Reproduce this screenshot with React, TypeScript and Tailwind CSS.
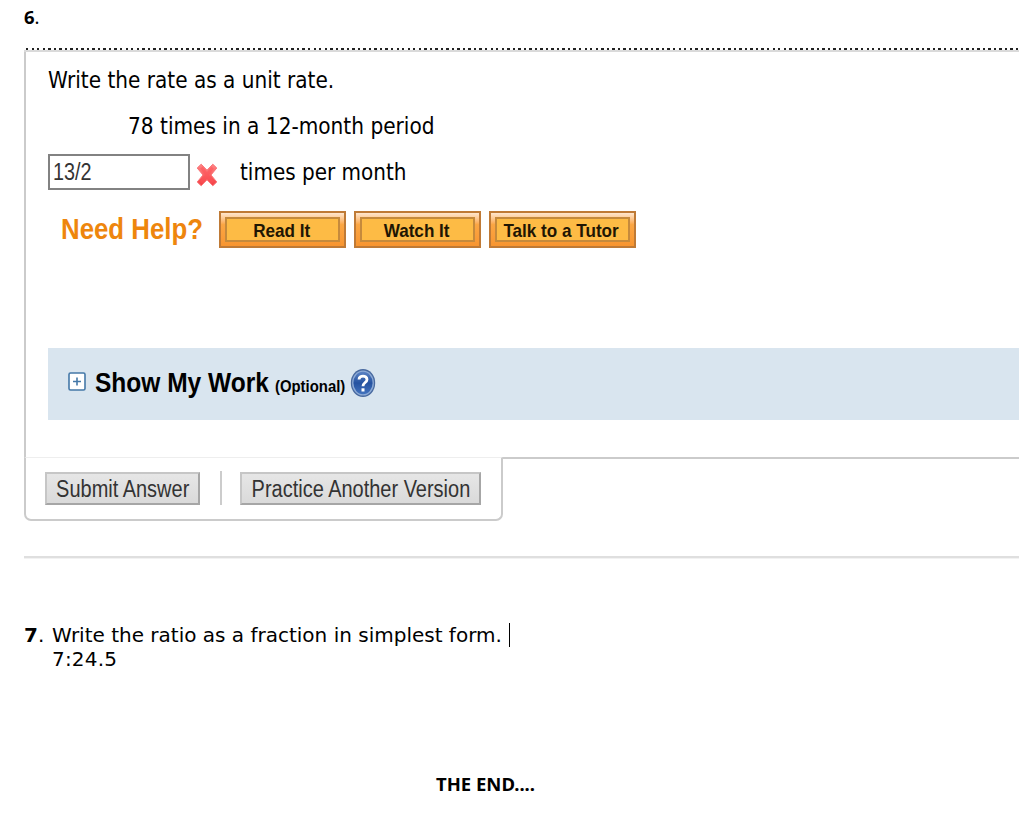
import { ReactNode } from "react";

const verdana = "font-['DejaVu_Sans',sans-serif] text-[23px] leading-[28px] whitespace-nowrap origin-left";

function HelpButton({ width, children }: { width: string; children: ReactNode }) {
  return (
    <button
      className={`${width} h-[37px] p-[4px] border-2 border-[#bf7a36] bg-linear-to-b from-[#fee6cd] via-[#fba643] via-35% to-[#f89530]`}
    >
      <span className="flex h-full items-center justify-center border-2 border-[#c58a3c] bg-[#fdbb45] font-['Liberation_Sans',sans-serif] text-[19px] font-bold text-[#1f1603] whitespace-nowrap">
        <span className="scale-x-[0.9] -translate-x-px translate-y-[2px]">{children}</span>
      </span>
    </button>
  );
}

function GrayButton({ width, children }: { width: string; children: ReactNode }) {
  return (
    <button
      className={`${width} flex h-[33px] items-center justify-center border-2 border-t-[#c6c6c6] border-l-[#c6c6c6] border-r-[#a6a6a6] border-b-[#a6a6a6] bg-linear-to-b from-[#e6e6e6] to-[#dadada] text-[23px] text-[#333] whitespace-nowrap`}
    >
      <span className="scale-x-[0.868] translate-y-px">{children}</span>
    </button>
  );
}

function WrongMark() {
  return (
    <svg className="ml-[5px] mr-px mt-[8px] h-[26px] w-[24px]" viewBox="0 0 24 26">
      <defs>
        <linearGradient id="wrong" x1="0" y1="0" x2="0" y2="1">
          <stop offset="0" stopColor="#ff8585" />
          <stop offset="1" stopColor="#f43e42" />
        </linearGradient>
      </defs>
      <path
        d="M6.2 2.2 L12 8.2 L17.8 2.2 L21.8 6 L16 13 L21.8 20 L17.8 23.8 L12 17.8 L6.2 23.8 L2.2 20 L8 13 L2.2 6 Z"
        fill="url(#wrong)"
        stroke="#fa7478"
        strokeWidth="1"
        strokeLinejoin="round"
      />
      <path d="M6.5 5.5 L17.5 20.5 M17.5 5.5 L6.5 20.5" stroke="#ff5157" strokeWidth="3" opacity="0.5" />
    </svg>
  );
}

function HelpIcon() {
  return (
    <svg className="mb-[2px] h-[30px] w-[26px]" viewBox="0 0 26 30">
      <defs>
        <linearGradient id="help" x1="0" y1="0" x2="0" y2="1">
          <stop offset="0" stopColor="#5b83c4" />
          <stop offset="0.5" stopColor="#2552a0" />
          <stop offset="1" stopColor="#4272bd" />
        </linearGradient>
      </defs>
      <ellipse cx="13" cy="15" rx="12.2" ry="14" fill="#48699f" />
      <ellipse cx="13" cy="15" rx="10.9" ry="12.6" fill="#8eabd6" />
      <ellipse cx="13" cy="15" rx="9.6" ry="11.2" fill="url(#help)" />
      <path d="M9 11.5 C9 7 17 7 17 11.5 C17 14.5 13 14.6 13 18.2" fill="none" stroke="#fff" strokeWidth="2.8" />
      <rect x="11.5" y="20.3" width="3" height="3.2" fill="#fff" />
    </svg>
  );
}

export default function App() {
  return (
    <div className="flex h-[815px] w-[1024px] flex-col overflow-hidden bg-white pl-6 font-['Liberation_Sans',sans-serif] text-black">
      <div className="h-12 pt-[5px] font-['Noto_Sans',sans-serif] text-[18.5px] leading-6">
        <b>6</b>.
      </div>

      <div className="w-[995px]">
        <div className="ml-[2px] h-[2px] bg-[repeating-linear-gradient(90deg,#222_0px,#222_2.4px,#fff_2.4px,#fff_5.53px)]" />
        <div className="h-[2px] bg-[#dadada]" />

        {/* question */}
        <div className="h-[405px] border-l-2 border-[#cbcbcb] pl-[22px]">
          <div className={`${verdana} h-[46px] w-max scale-x-[0.873] pt-[14px]`}>Write the rate as a unit rate.</div>
          <div className={`${verdana} ml-20 h-[46px] w-max scale-x-[0.875] pt-[14px]`}>78 times in a 12-month period</div>
          <div className="mt-[10px] flex h-[36px] items-start">
            <div className="flex h-[36px] w-[142px] shrink-0 items-center border-2 border-[#828282] pl-[3px] text-[23px] text-[#333]">
              <span className="origin-left scale-x-[0.86]">13/2</span>
            </div>
            <WrongMark />
            <div className={`${verdana} ml-[20px] mt-[4px] scale-x-[0.87]`}>times per month</div>
          </div>
          <div className="mt-[21px] flex h-[37px] items-center">
            <div className="ml-[13px] w-[158px] shrink-0 origin-left scale-x-[0.89] text-[29px] font-bold whitespace-nowrap text-[#ee860d]">
              Need Help?
            </div>
            <div className="flex gap-2">
              <HelpButton width="w-[127px]">Read It</HelpButton>
              <HelpButton width="w-[127px]">Watch It</HelpButton>
              <HelpButton width="w-[147px]">Talk to a Tutor</HelpButton>
            </div>
          </div>

          <div className="mt-[100px] flex h-[72px] items-center bg-[#d9e5ef] pl-[20px]">
            <svg className="mb-[5px] h-[19px] w-[18px] shrink-0" viewBox="0 0 18 19">
              <rect x="1" y="1" width="16" height="17" rx="1.5" fill="#fff" stroke="#4478a8" strokeWidth="1.6" />
              <path d="M9 5.5 V13.5 M5 9.5 H13" stroke="#4478a8" strokeWidth="1.6" />
            </svg>
            <div className="mb-[2px] ml-[9px] w-[180px] shrink-0 origin-left scale-x-[0.908] text-[27px] font-bold whitespace-nowrap">
              Show My Work
            </div>
            <div className="mt-[6px] w-[75px] shrink-0 origin-left scale-x-[0.93] text-[16px] font-bold whitespace-nowrap">
              (Optional)
            </div>
            <HelpIcon />
          </div>
        </div>

        {/* submit tab */}
        <div className="flex h-[64px]">
          <div className="flex w-[479px] items-start rounded-b-[7px] border-x-2 border-t border-b-2 border-[#cbcbcb] border-t-[#eee] pl-[19px] pt-[14px]">
            <GrayButton width="w-[155px]">Submit Answer</GrayButton>
            <div className="-mt-px ml-5 mr-[18px] h-[34px] w-[2px] bg-[#ccc]" />
            <GrayButton width="w-[241px]">Practice Another Version</GrayButton>
          </div>
          <div className="h-[2px] flex-1 bg-[#cbcbcb]" />
        </div>
        <div className="mt-[35px] h-[3px] border-b border-[#f2f2f2] bg-[#dfdfdf]" />
      </div>

      <div className="mt-[64px] flex font-['DejaVu_Sans',sans-serif] text-[20px] leading-6 whitespace-nowrap">
        <div className="w-7">
          <b>7</b>.
        </div>
        <div>
          <div className="flex">
            Write the ratio as a fraction in simplest form.
            <span className="ml-[7px] h-[24px] w-px bg-black" />
          </div>
          <div className="tracking-[0.2px]">7:24.5</div>
        </div>
      </div>

      <div className="ml-[412px] mt-[101px] font-['Noto_Sans',sans-serif] text-[18.5px] leading-6 font-bold">THE END....</div>
    </div>
  );
}
